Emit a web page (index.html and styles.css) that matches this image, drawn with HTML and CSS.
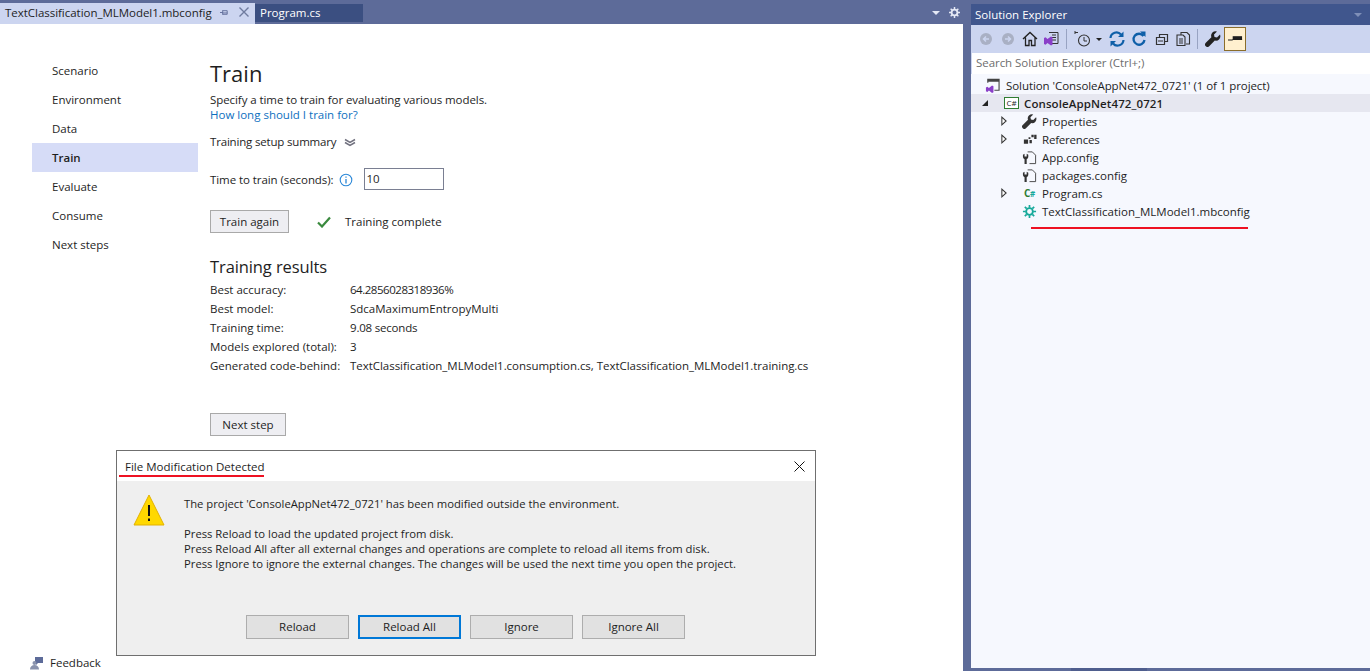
FILE: index.html
```html
<!DOCTYPE html>
<html lang="en">
<head>
<meta charset="utf-8">
<title>Train</title>
<link rel="stylesheet" href="styles.css">
</head>
<body>
<div class="shell">
  <main class="doc">
    <div class="tabbar">
      <div class="tab active"><span class="tab-name">TextClassification_MLModel1.mbconfig</span>
        <svg class="tab-pin" viewBox="0 0 10 10"><path d="M0 5h3M3 2.500v5M3 3h5v4H3M3 5.500h5" fill="none" stroke="#5d6b99"/></svg>
        <svg class="tab-x" viewBox="0 0 10 10"><path d="M.5.5l9 9M9.500.5l-9 9" fill="none" stroke="#6f7b9e" stroke-width="1.400"/></svg>
      </div>
      <div class="tab inactive">Program.cs</div>
      <div class="tab-tools">
        <svg class="caret" viewBox="0 0 8 4"><path d="M0 0h8L4 4z" fill="#e4e8f5"/></svg>
        <svg class="gear" viewBox="0 0 12 12"><circle cx="6" cy="6" r="3.200" fill="none" stroke="#e4e8f5" stroke-width="2"/><path d="M6 0v2.400M6 9.600V12M0 6h2.400M9.600 6H12M1.800 1.800l1.700 1.700M8.500 8.500l1.700 1.700M10.200 1.800L8.500 3.500M3.500 8.500l-1.700 1.700" stroke="#e4e8f5" stroke-width="1.600"/></svg>
      </div>
    </div>
    <div class="doc-body">
      <nav class="steps">
        <div class="step">Scenario</div>
        <div class="step">Environment</div>
        <div class="step">Data</div>
        <div class="step current">Train</div>
        <div class="step">Evaluate</div>
        <div class="step">Consume</div>
        <div class="step">Next steps</div>
      </nav>
      <section class="content">
        <h1 class="title">Train</h1>
        <p class="line tight">Specify a time to train for evaluating various models.</p>
        <a class="line link" href="#">How long should I train for?</a>
        <div class="summary"><span>Training setup summary</span>
          <svg class="chev" viewBox="0 0 12 9"><path d="M1 1.500l5 3 5-3M1 4.500l5 3 5-3" fill="none" stroke="#71717f" stroke-width="1.500"/></svg>
        </div>
        <div class="time-row"><span class="tight">Time to train (seconds):</span>
          <svg class="info" viewBox="0 0 14 14"><circle cx="7" cy="7" r="5.800" fill="none" stroke="#2b88d8" stroke-width="1.100"/><path d="M7 6v4.400M7 3.500v1.300" stroke="#2b88d8" stroke-width="1.300"/></svg>
          <div class="time-input">10</div>
        </div>
        <div class="train-row"><button class="btn train-btn">Train again</button>
          <svg class="check" viewBox="0 0 14 12"><path d="M1 6.500l4 4L13 1.500" fill="none" stroke="#3a8a3e" stroke-width="2.200"/></svg>
          <span>Training complete</span>
        </div>
        <h2 class="subtitle">Training results</h2>
        <dl class="results">
          <dt>Best accuracy:</dt><dd class="digits">64.2856028318936%</dd>
          <dt>Best model:</dt><dd>SdcaMaximumEntropyMulti</dd>
          <dt>Training time:</dt><dd class="tight2">9.08 seconds</dd>
          <dt>Models explored (total):</dt><dd>3</dd>
          <dt>Generated code-behind:</dt><dd class="tight3">TextClassification_MLModel1.consumption.cs, TextClassification_MLModel1.training.cs</dd>
        </dl>
        <button class="btn next-btn">Next step</button>
      </section>
    </div>
    <div class="feedback">
      <svg class="fb-icon" viewBox="0 0 14 14"><path d="M5 1h8v6H8L6 9V7H5z" fill="#5d6b99"/><circle cx="4.500" cy="7" r="2" fill="#8a93ad"/><path d="M0 13.500c0-3 2-4.500 4.500-4.500S9 10.500 9 13.500z" fill="#8a93ad"/></svg>
      <span>Feedback</span>
    </div>
  </main>
  <div class="splitter"></div>
  <aside class="explorer">
    <header class="exp-head"><span>Solution Explorer</span>
      <svg class="exp-caret" viewBox="0 0 8 4"><path d="M0 0h8L4 4z" fill="#7f8fb8"/></svg>
    </header>
    <div class="exp-tools">
      <svg class="ti nudge" viewBox="0 0 16 16"><circle cx="8" cy="8" r="6" fill="#a9b0c4"/><path d="M11 8H5.500M8 5.500L5.500 8 8 10.500" fill="none" stroke="#ccd5f0" stroke-width="1.500"/></svg>
      <svg class="ti nudge" viewBox="0 0 16 16"><circle cx="8" cy="8" r="6" fill="#a9b0c4"/><path d="M5 8h5.500M8 5.500L10.500 8 8 10.500" fill="none" stroke="#ccd5f0" stroke-width="1.500"/></svg>
      <svg class="ti" viewBox="0 0 16 16"><path d="M1 8l7-6.500L15 8M3.500 6.500V14.500h3.500v-5h2.500v5H13V6.500" fill="none" stroke="#222" stroke-width="1.300"/></svg>
      <svg class="ti" viewBox="0 0 16 16"><path d="M6 1.500h9v11H9" fill="none" stroke="#333"/><path d="M9 4h4M9 6.500h4M9 9h4" stroke="#333"/><path d="M1 7l1.500-.8 2 1.800L8 5.500l1.500.8v7.400L8 14.500 4.500 12l-2 1.800L1 13z" fill="#8a3fc8"/></svg>
      <i class="sep first"></i>
      <svg class="ti hist" viewBox="0 0 20 16"><path d="M2 0v3M2 1.500h3" stroke="#333" fill="none"/><circle cx="11" cy="9.500" r="5.500" fill="none" stroke="#333" stroke-width="1.100"/><path d="M11 6v4h3" fill="none" stroke="#333"/></svg>
      <svg class="mini" viewBox="0 0 6 3"><path d="M0 0h6L3 3z" fill="#222"/></svg>
      <svg class="ti sync" viewBox="0 0 16 16"><path d="M1.500 7A6 6 0 0 1 12 3.500M14.500 9A6 6 0 0 1 4 12.500" fill="none" stroke="#0e5fa8" stroke-width="2.200"/><path d="M14.500.5v5.500H9zM1.500 15.500V10H7z" fill="#0e5fa8"/></svg>
      <svg class="ti refresh" viewBox="0 0 16 16"><path d="M12.500 5A5.500 5.500 0 1 0 13.500 9" fill="none" stroke="#0e5fa8" stroke-width="2.300"/><path d="M9 .5h5.500V6z" fill="#0e5fa8"/></svg>
      <svg class="ti" viewBox="0 0 16 16"><path d="M2.500 6.500h8v7h-8zM5.500 6V3.500h8v7H11" fill="none" stroke="#333" stroke-width="1.200"/><path d="M4 10h5" stroke="#333"/></svg>
      <svg class="ti" viewBox="0 0 16 16"><path d="M6 4V1.500h6l2.500 2.500v9H11M2 4h6l2 2v8.500H2z" fill="none" stroke="#333" stroke-width="1.100"/><path d="M4 8h4M4 10h4M4 12h4" stroke="#333"/></svg>
      <i class="sep"></i>
      <svg class="ti" viewBox="0 0 16 16"><path d="M15 3.500l-3 3-2.500-.6L9 3.400l3-3a4.500 4.500 0 0 0-5.600 5.800L.8 11.800a2.400 2.400 0 0 0 3.400 3.400l5.600-5.600A4.500 4.500 0 0 0 15 3.500z" fill="#222"/></svg>
      <div class="pin-on"><svg viewBox="0 0 16 6"><path d="M0 4h5M5 3.500h10" stroke="#1e1e1e" stroke-width="1.200"/><path d="M5 0h10v4H5z" fill="#1e1e1e"/></svg></div>
    </div>
    <div class="exp-search">Search Solution Explorer (Ctrl+;)</div>
    <div class="tree">
      <div class="row lvl0">
        <svg class="ic" viewBox="0 0 16 16"><path d="M3 5V1.500h12V13h-5" fill="none" stroke="#444" stroke-width="1.200"/><path d="M3 1.500h12V4H3z" fill="#444"/><path d="M1 10l1.500-.8 1.700 1.500L7.500 8 9 8.800v6.400L7.500 16l-3.300-2.700L2.500 15 1 14z" fill="#8a3fc8"/></svg>
        <span class="tight">Solution 'ConsoleAppNet472_0721' (1 of 1 project)</span>
      </div>
      <div class="row lvl1 selected">
        <svg class="exp-arrow" viewBox="0 0 8 8"><path d="M8 0v8H0z" fill="#222"/></svg>
        <div class="csproj">C#</div>
        <b>ConsoleAppNet472_0721</b>
      </div>
      <div class="row lvl2"><svg class="twisty" viewBox="0 0 7 11"><path d="M1 1l5 4.500L1 10z" fill="#fff" stroke="#333" stroke-width="1.200"/></svg>
        <svg class="ic" viewBox="0 0 16 16"><path d="M15 3.500l-3 3-2.500-.6L9 3.400l3-3a4.500 4.500 0 0 0-5.600 5.800L.8 11.800a2.400 2.400 0 0 0 3.400 3.400l5.600-5.600A4.500 4.500 0 0 0 15 3.500z" fill="#333"/></svg>
        <span class="tight3">Properties</span></div>
      <div class="row lvl2"><svg class="twisty" viewBox="0 0 7 11"><path d="M1 1l5 4.500L1 10z" fill="#fff" stroke="#333" stroke-width="1.200"/></svg>
        <svg class="ic" viewBox="0 0 16 16"><path d="M10 3h2.500v2.500H10zM13 3h2.500v4.500H13zM2 8h4.500v4.500H2zM8 8.500h2.500V12H8zM7 5.500h2V7.500H7z" fill="#333"/></svg>
        <span class="tight2">References</span></div>
      <div class="row lvl2 leaf">
        <svg class="ic" viewBox="0 0 16 16"><path d="M6 2h5l3.500 3.500V14.500H8" fill="none" stroke="#444"/><path d="M1 5v2.500a2.500 2.500 0 0 0 1.700 2.300V15H5V9.800A2.500 2.500 0 0 0 6.700 7.500V5L5 4v3H2.700V4z" fill="#333"/></svg>
        <span>App.config</span></div>
      <div class="row lvl2 leaf">
        <svg class="ic" viewBox="0 0 16 16"><path d="M6 2h5l3.500 3.500V14.500H8" fill="none" stroke="#444"/><path d="M1 5v2.500a2.500 2.500 0 0 0 1.700 2.300V15H5V9.800A2.500 2.500 0 0 0 6.700 7.500V5L5 4v3H2.700V4z" fill="#333"/></svg>
        <span>packages.config</span></div>
      <div class="row lvl2"><svg class="twisty" viewBox="0 0 7 11"><path d="M1 1l5 4.500L1 10z" fill="#fff" stroke="#333" stroke-width="1.200"/></svg>
        <div class="ic cs"><em>C</em><i>#</i></div>
        <span>Program.cs</span></div>
      <div class="row lvl2 leaf">
        <svg class="ic" viewBox="0 0 16 16"><circle cx="8" cy="8" r="3.600" fill="none" stroke="#17a99a" stroke-width="2"/><path d="M8 1v3M8 12v3M1 8h3M12 8h3M3 3l2 2M11 11l2 2M13 3l-2 2M5 11l-2 2" stroke="#17a99a" stroke-width="1.800"/></svg>
        <span>TextClassification_MLModel1.mbconfig</span></div>
      <div class="redline tree-red"></div>
    </div>
    <div class="exp-foot"><div class="exp-thumb"></div></div>
  </aside>
</div>
<div class="dialog">
  <div class="dlg-title"><span>File Modification Detected</span>
    <svg class="dlg-x" viewBox="0 0 11 11"><path d="M.5.5l10 10M10.500.5l-10 10" stroke="#111" fill="none"/></svg>
  </div>
  <div class="redline dlg-red"></div>
  <div class="dlg-body">
    <div class="dlg-msg">
      <svg class="warn" viewBox="0 0 32 32"><path d="M16 1L31 31H1z" fill="#ffd800" stroke="#e2b100" stroke-linejoin="round"/><path d="M16 11v11M16 24.500v2.500" stroke="#111" stroke-width="2"/></svg>
      <div class="dlg-text">
        <p>The project 'ConsoleAppNet472_0721' has been modified outside the environment.</p>
        <p class="gap">Press Reload to load the updated project from disk.</p>
        <p>Press Reload All after all external changes and operations are complete to reload all items from disk.</p>
        <p>Press Ignore to ignore the external changes. The changes will be used the next time you open the project.</p>
      </div>
    </div>
    <div class="dlg-btns">
      <button class="dbtn">Reload</button>
      <button class="dbtn focus">Reload All</button>
      <button class="dbtn">Ignore</button>
      <button class="dbtn">Ignore All</button>
    </div>
  </div>
</div>
</body>
</html>
```
FILE: styles.css
```css
* { box-sizing: border-box; }
html, body { margin: 0; height: 671px; overflow: hidden; }
body { font-family: "Open Sans", "Noto Sans", sans-serif; font-size: 11.5px; color: #1e1e1e; background: #5d6b99; position: relative; }
.shell { display: flex; height: 671px; }
p, h1, h2, dl, dd { margin: 0; }
.tight { letter-spacing: -.07px; }
.tight2 { letter-spacing: -.2px; }
.tight3 { letter-spacing: -.035px; }
.digits { letter-spacing: -.47px; }

.doc { width: 963px; display: flex; flex-direction: column; position: relative; }
.tabbar { height: 24px; display: flex; align-items: flex-start; padding-top: 3px; }
.tab { display: flex; align-items: center; }
.tab.active { width: 255px; height: 21px; background: #ccd5f0; padding: 0 6px 3px 5px; color: #1e1e1e; }
.tab-name { flex: 1; white-space: nowrap; letter-spacing: -.03px; }
.tab-pin { width: 9px; height: 9px; margin-right: 10px; }
.tab-x { width: 10px; height: 10px; }
.tab.inactive { width: 108px; height: 18px; margin-top: 1px; background: #3b4f81; color: #fff; padding: 0 5px 2px; }
.tab-tools { margin-left: auto; display: flex; align-items: center; gap: 9px; padding: 4px 3px 0 0; }
.caret { width: 8px; height: 4px; }
.gear { width: 11px; height: 11px; }

.doc-body { flex: 1; background: #fff; display: flex; padding: 32px 0 0 32px; min-height: 0; }
.steps { width: 166px; flex: none; }
.step { height: 29px; line-height: 29px; padding-left: 20px; }
.step.current { background: #d6dcf7; font-weight: 600; }
.content { margin-left: 12px; padding-top: 1px; flex: 1; line-height: 15px; }
.title { font-size: 22px; font-weight: 400; line-height: 32px; color: #1e1e1e; margin-bottom: 3px; }
.line { display: block; height: 15px; white-space: nowrap; }
.link { color: #0e70c0; text-decoration: none; }
.summary { display: flex; align-items: center; gap: 8px; margin-top: 11px; height: 16px; letter-spacing: -.18px; }
.chev { width: 12px; height: 9px; margin-top: 3px; }
.time-row { display: flex; align-items: center; height: 23px; margin-top: 19px; }
.info { width: 14px; height: 14px; margin: 0 11px 0 5px; }
.time-input { width: 80px; height: 22px; border: 1px solid #7a7f92; line-height: 20px; padding-left: 2px; background: #fff; margin-top: -2px; }
.train-row { display: flex; align-items: center; margin-top: 19px; height: 23px; }
.btn { font: inherit; color: #1e1e1e; background: #eeeef2; border: 1px solid #a9a9a9; height: 23px; padding: 0; }
.train-btn { width: 79px; margin-right: 28px; }
.check { width: 14px; height: 12px; margin-right: 14px; }
.subtitle { font-size: 16.5px; font-weight: 400; line-height: 22px; margin-top: 23px; letter-spacing: -.1px; }
.results { display: grid; grid-template-columns: 140px 1fr; grid-auto-rows: 19px; align-items: center; margin-top: 2px; white-space: nowrap; }
.next-btn { width: 76px; margin-top: 38px; display: block; }
.feedback { position: absolute; left: 30px; top: 655px; display: flex; align-items: center; gap: 6px; height: 15px; background: #fff; }
.fb-icon { width: 14px; height: 14px; }

.splitter { width: 8px; flex: none; background: #5d6b99; }
.explorer { flex: 1; display: flex; flex-direction: column; padding-top: 4px; min-width: 0; }
.exp-head { height: 21px; background: #40568d; color: #fff; display: flex; align-items: center; justify-content: space-between; padding: 0 8px 0 4px; flex: none; }
.exp-caret { width: 8px; height: 4px; }
.exp-tools { height: 28px; background: #ccd5f0; display: flex; align-items: center; padding: 0 0 0 7px; gap: 5px; flex: none; }
.ti { width: 16px; height: 16px; flex: none; }
.ti.nudge { margin-right: 1px; }
.ti.hist { width: 20px; }
.mini { width: 6px; height: 3px; margin: 0 2px 0 -2px; }
.ti.sync { margin-right: 1px; }
.ti.refresh { margin-right: 2px; }
.sep { width: 1px; height: 20px; background: #98a3c2; margin: 0 2px 0 1px; }
.sep.first { margin: 0 1px 0 2px; }
.pin-on { width: 22px; height: 24px; background: #fff0cf; border: 1px solid #8a6d2b; display: flex; align-items: center; justify-content: center; margin-left: -2px; }
.pin-on svg { width: 15px; height: 6px; }
.exp-search { height: 21px; line-height: 20px; background: #fff; color: #6d6d6d; padding-left: 4px; flex: none; border-left: 1px solid #ccd5f0; letter-spacing: -.05px; }
.tree { flex: 1; background: #f6f8fe; padding-top: 2px; position: relative; }
.row { height: 18px; display: flex; align-items: center; white-space: nowrap; }
.ic { width: 15px; height: 15px; flex: none; margin-right: 5px; }
.lvl0 { padding-left: 14px; }
.lvl0 .ic { margin-right: 6px; }
.lvl1 { padding-left: 11px; background: #e6e7f0; }
.lvl1 b { font-weight: 600; letter-spacing: .1px; }
.exp-arrow { width: 6px; height: 6px; margin-right: 16px; }
.csproj { width: 15px; height: 12px; border: 1px solid #2f7d32; font-size: 8px; line-height: 10px; text-align: center; background: #fff; margin-right: 5px; }
.lvl2 { padding-left: 30px; }
.lvl2.leaf { padding-left: 51px; }
.twisty { width: 6px; height: 10px; margin-right: 15px; flex: none; }
.cs { font-size: 10px; font-weight: 700; line-height: 15px; text-align: center; letter-spacing: -.3px; }
.cs em { font-style: normal; color: #2f7d32; }
.cs i { font-style: normal; color: #17a99a; font-size: 8px; }
.exp-foot { height: 3px; margin-left: 100px; background: #5d6b99; flex: none; }
.exp-thumb { width: 76px; height: 3px; background: #4f5e8e; }
.redline { position: absolute; height: 2px; background: #ee1122; }
.tree-red { left: 60px; top: 153px; width: 217px; }

.dialog { position: absolute; left: 116px; top: 450px; width: 700px; height: 206px; border: 1px solid #6f6f6f; background: #fff; display: flex; flex-direction: column; }
.dlg-title { height: 30px; padding: 0 10px 0 8px; display: flex; align-items: center; justify-content: space-between; flex: none; }
.dlg-x { width: 11px; height: 11px; margin-right: 0; }
.dlg-red { left: 2px; top: 24px; width: 145px; }
.dlg-body { flex: 1; background: #efefef; display: flex; flex-direction: column; padding: 15px 0 16px 16px; }
.dlg-msg { display: flex; flex: 1; }
.warn { width: 32px; height: 32px; flex: none; margin: -2px 19px 0 0; }
.dlg-text { line-height: 15px; font-size: 11.28px; }
.dlg-text p { white-space: nowrap; }
.dlg-text .gap { margin-top: 15px; }
.dlg-btns { display: flex; gap: 9px; padding-left: 113px; }
.dbtn { font: inherit; color: #1e1e1e; width: 103px; height: 24px; background: #e1e1e1; border: 1px solid #adadad; padding: 0 0 1px; }
.dbtn.focus { border: 2px solid #0078d7; padding: 0 0 1px; }
```
